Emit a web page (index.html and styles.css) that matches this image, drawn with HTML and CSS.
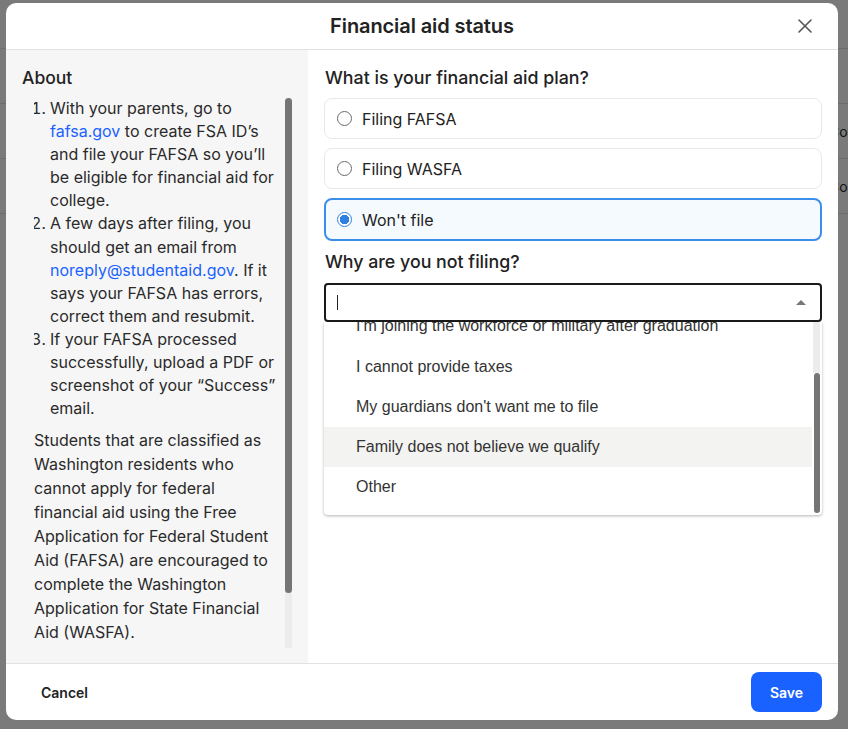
FILE: index.html
```html
<!DOCTYPE html>
<html lang="en">
<head>
  <meta charset="UTF-8" />
  <meta name="viewport" content="width=device-width, initial-scale=1.0"/>
  <title>Financial aid status</title>
  <link rel="stylesheet" href="styles.css">
</head>
<body>

  <div class="backdrop">
    <div class="behind">
      <div class="row"></div>
      <div class="row"><span>Colo</span></div>
      <div class="row"><span>Colo</span></div>
      <div class="row"></div>
    </div>
  </div>

  <div class="modal">
    <header class="modal-head">
      <h1>Financial aid status</h1>
      <button class="close" aria-label="Close">
        <svg width="16" height="16" viewBox="0 0 16 16"><path d="M2 2L14 14M14 2L2 14" stroke="#555" stroke-width="1.6" stroke-linecap="round"/></svg>
      </button>
    </header>

    <div class="modal-body">
      <aside class="about">
        <h2>About</h2>
        <div class="about-scroll">
          <div class="about-text">
            <ol>
              <li>With your parents, go to <a href="#">fafsa.gov</a> to create FSA ID’s and file your FAFSA so you’ll be eligible for financial aid for college.</li>
              <li>A few days after filing, you should get an email from <a href="#">noreply@studentaid.gov</a>. If it says your FAFSA has errors, correct them and resubmit.</li>
              <li>If your FAFSA processed successfully, upload a PDF or screenshot of your “Success” email.</li>
            </ol>
            <p>Students that are classified as Washington residents who cannot apply for federal financial aid using the Free Application for Federal Student Aid (FAFSA) are encouraged to complete the Washington Application for State Financial Aid (WASFA).</p>
          </div>
          <div class="scrollbar"><div class="thumb"></div></div>
        </div>
      </aside>

      <section class="form">
        <h3>What is your financial aid plan?</h3>
        <label class="option"><span class="radio"></span>Filing FAFSA</label>
        <label class="option"><span class="radio"></span>Filing WASFA</label>
        <label class="option selected"><span class="radio"></span>Won't file</label>

        <h3 class="second">Why are you not filing?</h3>
        <div class="combo">
          <div class="combo-input">
            <span class="caret"></span>
            <span class="arrow"></span>
          </div>
          <ul class="menu">
            <li class="cut">I'm joining the workforce or military after graduation</li>
            <li>I cannot provide taxes</li>
            <li>My guardians don't want me to file</li>
            <li class="hover">Family does not believe we qualify</li>
            <li>Other</li>
          </ul>
        </div>
      </section>
    </div>

    <footer class="modal-foot">
      <button class="cancel">Cancel</button>
      <button class="save">Save</button>
    </footer>
  </div>

</body>
</html>
```

FILE: styles.css
```css
  body {
    margin: 0;
    font-family: Inter, "Noto Sans", sans-serif;
    background-color: #777;
    color: #222;
    height: 729px;
    overflow: hidden;
  }

  .backdrop {
    position: absolute;
    inset: 0;
    background-color: #7a7a7a;
  }

  .behind {
    padding-top: 48px;
  }

  .behind .row {
    height: 54px;
    border-top: 1px solid #6d6d6d;
    font-size: 14px;
    color: #111;
    display: flex;
    align-items: center;
    padding-left: 829px;
  }

  .modal {
    position: absolute;
    left: 6px;
    top: 3px;
    width: 832px;
    height: 717px;
    background: #fff;
    border-radius: 10px;
    display: flex;
    flex-direction: column;
    overflow: hidden;
  }

  .modal-head {
    height: 46px;
    display: flex;
    align-items: center;
    justify-content: center;
    border-bottom: 1px solid #e2e2e2;
    position: relative;
  }

  .modal-head h1 {
    margin: 0;
    font-size: 20px;
    font-weight: 600;
    letter-spacing: -0.1px;
    color: #222;
  }

  .close {
    position: absolute;
    right: 25px;
    top: 15px;
    background: none;
    border: none;
    padding: 0;
    width: 16px;
    height: 16px;
  }

  .modal-body {
    flex: 1;
    display: flex;
    min-height: 0;
  }

  .about {
    width: 302px;
    background-color: #f6f6f6;
    padding: 16px 16px 15px 16px;
    box-sizing: border-box;
    display: flex;
    flex-direction: column;
  }

  .about h2 {
    margin: 0 0 7px 0;
    font-size: 17.5px;
    font-weight: 500;
    line-height: 24px;
    color: #222;
  }

  .about-scroll {
    flex: 1;
    display: flex;
    min-height: 0;
    padding-left: 12px;
    font-size: 16px;
    line-height: 23.1px;
    color: #2a2a2a;
  }

  .about-text {
    flex: 1;
    overflow: hidden;
    padding-right: 4px;
  }

  .scrollbar {
    width: 7px;
    background: #ececec;
    margin-top: 1px;
  }

  .scrollbar .thumb {
    height: 90%;
    background: #757575;
    border-radius: 4px;
  }

  .about-text ol {
    margin: 0;
    padding-left: 16px;
  }

  .about-text a {
    color: #1a62ff;
    text-decoration: none;
  }

  .about-text p {
    margin: 8px 0 0 0;
    line-height: 24px;
  }

  .form {
    flex: 1;
    padding: 16px 16px 0 16px;
  }

  .form h3 {
    margin: 0 0 8px 1px;
    font-size: 17.8px;
    font-weight: 500;
    line-height: 24px;
    color: #222;
  }

  .form h3.second {
    margin-top: 9px;
    margin-bottom: 9px;
  }

  .option {
    display: flex;
    align-items: center;
    height: 41px;
    box-sizing: border-box;
    border: 1px solid #e8e8e8;
    border-radius: 8px;
    padding-left: 12px;
    margin-bottom: 9px;
    font-size: 16px;
    color: #222;
  }

  .radio {
    width: 13px;
    height: 13px;
    border: 1.6px solid #6b6b6b;
    border-radius: 50%;
    margin-right: 10px;
    box-sizing: content-box;
    background: #fff;
  }

  .option.selected {
    border: 2px solid #3b8fe8;
    background-color: #f5faff;
    height: 43px;
    padding-left: 11px;
    margin-bottom: 0;
  }

  .option.selected .radio {
    border-color: #2f80e0;
    background: radial-gradient(circle, #2f80e0 0 4.5px, #fff 5px);
  }

  .combo {
    position: relative;
  }

  .combo-input {
    height: 39px;
    box-sizing: border-box;
    border: 2px solid #1a1a1a;
    border-radius: 4px;
    display: flex;
    align-items: center;
    justify-content: space-between;
    padding: 0 14px 0 11px;
  }

  .caret {
    width: 1px;
    height: 15px;
    background: #222;
  }

  .arrow {
    width: 0;
    height: 0;
    border-left: 5px solid transparent;
    border-right: 5px solid transparent;
    border-bottom: 5px solid #777;
  }

  .menu {
    position: absolute;
    left: 0;
    right: 0;
    top: 39px;
    height: 193px;
    margin: 0;
    padding: 0;
    list-style: none;
    background: #fff;
    box-shadow: 0 1px 3px rgba(0,0,0,0.3);
    border-radius: 0 0 4px 4px;
    overflow: hidden;
    font-family: "Liberation Sans", Arial, sans-serif;
    font-size: 16px;
    color: #333;
  }

  .menu::after {
    content: "";
    position: absolute;
    right: 2px;
    top: 0;
    bottom: 0;
    width: 7px;
    background: linear-gradient(#ececec 0 51px, transparent 51px);
  }

  .menu::before {
    content: "";
    position: absolute;
    right: 2px;
    top: 51px;
    bottom: 2px;
    width: 6px;
    border-radius: 3px;
    background: #757575;
    z-index: 1;
  }

  .menu li {
    height: 40px;
    line-height: 40px;
    padding-left: 32px;
    margin-right: 10px;
  }

  .menu li.cut {
    height: 25px;
    line-height: 8px;
  }

  .menu li.hover {
    background-color: #f3f3f2;
  }

  .modal-foot {
    height: 56px;
    border-top: 1px solid #e2e2e2;
    display: flex;
    align-items: center;
    justify-content: space-between;
    padding: 0 16px 0 16px;
  }

  .cancel {
    background: none;
    border: none;
    font-family: Inter, sans-serif;
    font-size: 14px;
    font-weight: 600;
    color: #222;
    padding: 8px 19px;
  }

  .save {
    background-color: #1a62ff;
    border: none;
    color: #fff;
    font-family: Inter, sans-serif;
    font-size: 14px;
    font-weight: 600;
    width: 71px;
    height: 40px;
    border-radius: 8px;
  }
```
